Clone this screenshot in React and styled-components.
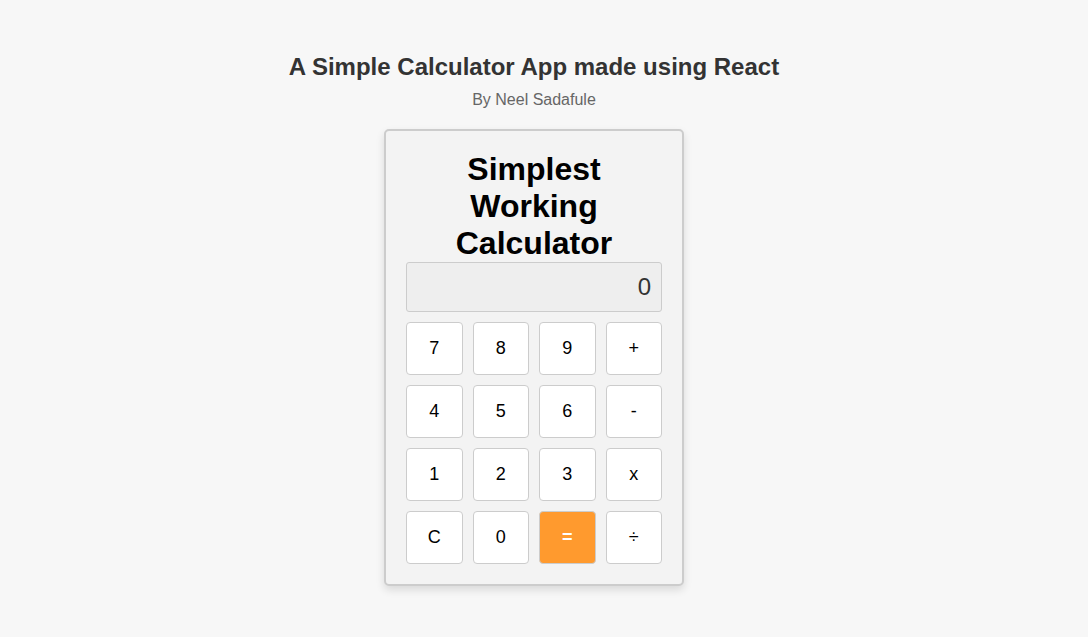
import React, { useState } from "react";
import styled, { createGlobalStyle } from "styled-components";

const GlobalStyle = createGlobalStyle`
  body {
    margin: 0;
    background-color: #f7f7f7;
    font-family: "Liberation Sans", Arial, sans-serif;
  }
`;

const Page = styled.div`
  display: flex;
  flex-direction: column;
  align-items: center;
  padding: 53px 20px 40px 0;
`;

const Title = styled.h2`
  font-size: 24px;
  font-weight: 700;
  color: #333;
  margin: 0 0 10px;
`;

const Author = styled.p`
  font-size: 16px;
  color: #666;
  margin: 0 0 20px;
`;

const Calculator = styled.div`
  width: 256px;
  padding: 20px;
  background-color: #f3f3f3;
  border: 2px solid #ccc;
  border-radius: 5px;
  box-shadow: 0 4px 8px rgba(0, 0, 0, 0.12);
`;

const Heading = styled.h1`
  font-size: 32px;
  font-weight: 700;
  color: #000;
  text-align: center;
  margin: 0;
`;

const Display = styled.div`
  height: 28px;
  padding: 10px;
  margin-bottom: 10px;
  background-color: #eee;
  border: 1px solid #ccc;
  border-radius: 3px;
  font-size: 24px;
  color: #333;
  text-align: right;
  line-height: 28px;
`;

const Keypad = styled.div`
  display: grid;
  grid-template-columns: repeat(4, 1fr);
  gap: 10px;
`;

const Key = styled.button`
  height: 53px;
  padding: 0;
  font-family: "Liberation Sans", Arial, sans-serif;
  font-size: 18px;
  font-weight: ${(props) => (props.$accent ? 700 : 400)};
  color: ${(props) => (props.$accent ? "#fff" : "#000")};
  background-color: ${(props) => (props.$accent ? "#ff9a2e" : "#fff")};
  border: 1px solid #ccc;
  border-radius: 4px;
  cursor: pointer;

  &:hover {
    background-color: ${(props) => (props.$accent ? "#f08a1c" : "#f0f0f0")};
  }
`;

const keys = ["7", "8", "9", "+", "4", "5", "6", "-", "1", "2", "3", "x", "C", "0", "=", "÷"];

const App = () => {
  const [value, setValue] = useState("0");

  const press = (k) => {
    if (k === "C") return setValue("0");
    if (k === "=") {
      try {
        const expr = value.replace(/x/g, "*").replace(/÷/g, "/");
        // eslint-disable-next-line no-new-func
        const result = Function(`return (${expr})`)();
        return setValue(String(result));
      } catch (e) {
        return setValue("Error");
      }
    }
    setValue((v) => (v === "0" || v === "Error" ? k : v + k));
  };

  return (
    <>
      <GlobalStyle />
      <Page>
        <Title>A Simple Calculator App made using React</Title>
        <Author>By Neel Sadafule</Author>
        <Calculator>
          <Heading>Simplest Working Calculator</Heading>
          <Display>{value}</Display>
          <Keypad>
            {keys.map((k) => (
              <Key key={k} $accent={k === "="} onClick={() => press(k)}>
                {k}
              </Key>
            ))}
          </Keypad>
        </Calculator>
      </Page>
    </>
  );
};

export default App;
